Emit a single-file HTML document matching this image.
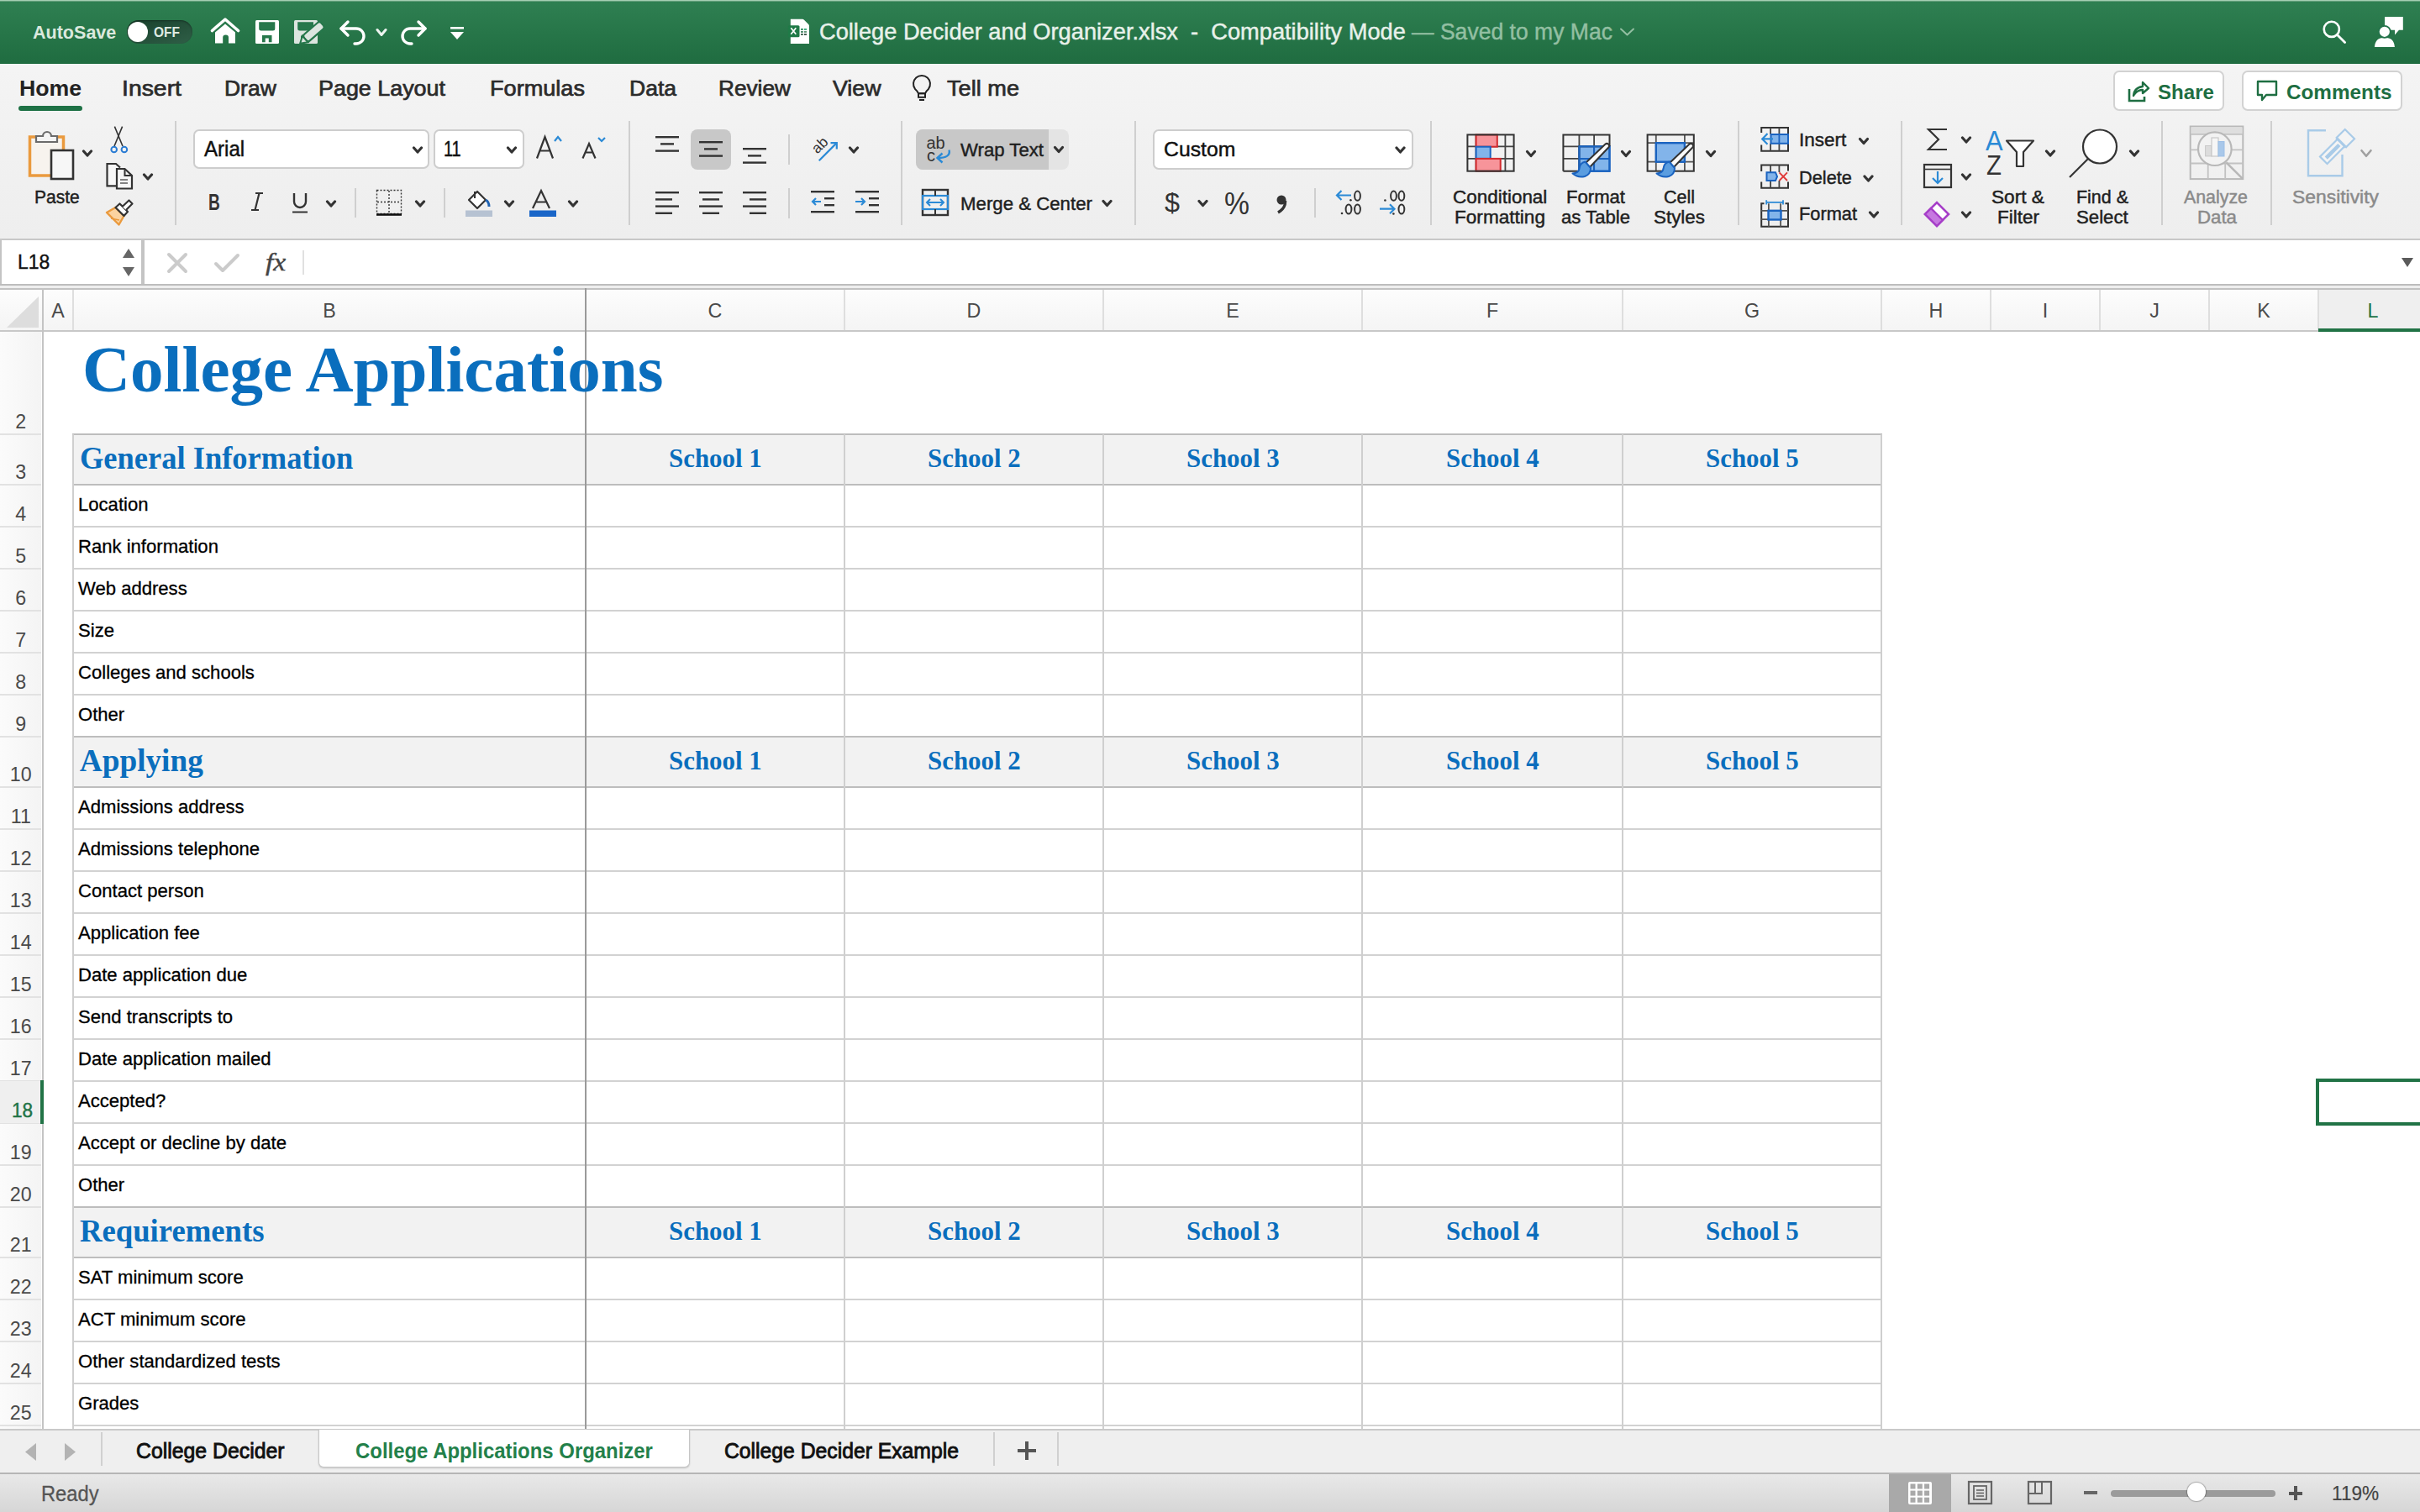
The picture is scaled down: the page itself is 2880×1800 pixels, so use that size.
<!DOCTYPE html>
<html><head><meta charset="utf-8"><style>
html,body{margin:0;padding:0;width:2880px;height:1800px;overflow:hidden;background:#fff;font-family:"Liberation Sans",sans-serif;}
.r{position:absolute;}
.t{position:absolute;white-space:pre;transform-origin:0 0;}
</style></head><body>
<div class="r" style="left:0px;top:0px;width:2880px;height:76px;background:linear-gradient(#2f8052,#1f6c40);"></div>
<div class="r" style="left:0px;top:0px;width:2880px;height:1px;background:#a6cfb3;"></div>
<div class="r" style="left:0px;top:1px;width:2880px;height:1px;background:#649f7b;"></div>
<div class="t" style="left:38.70px;top:27.00px;font-size:22.97px;line-height:22.97px;color:#dbe9de;font-weight:700;font-family:'Liberation Sans', sans-serif;transform:scaleX(0.9375);">AutoSave</div>
<div class="r" style="left:151px;top:24px;width:78px;height:28px;background:linear-gradient(160deg,#183f2b,#2f5f47);border-radius:14px;box-shadow:inset 0 1px 2px rgba(0,0,0,.35);"></div>
<div class="r" style="left:152px;top:26px;width:24px;height:24px;background:#ffffff;border-radius:12px;"></div>
<div class="t" style="left:183.00px;top:31.00px;font-size:15.99px;line-height:15.99px;color:#dfeae2;font-weight:700;font-family:'Liberation Sans', sans-serif;transform:scaleX(0.9695);">OFF</div>
<div class="r" style="left:0px;top:76px;width:2880px;height:209px;background:linear-gradient(#f4f4f4,#eeeeee);"></div>
<div class="r" style="left:0px;top:284px;width:2880px;height:2px;background:#c8c8c8;"></div>
<div class="t" style="left:22.60px;top:92.00px;font-size:26.00px;line-height:26.00px;color:#222222;font-weight:700;font-family:'Liberation Sans', sans-serif;transform:scaleX(1.0259);">Home</div>
<div class="t" style="left:145.00px;top:92.00px;font-size:26.00px;line-height:26.00px;color:#2b2b2b;font-weight:400;font-family:'Liberation Sans', sans-serif;transform:scaleX(1.0919);-webkit-text-stroke:0.7px #2b2b2b;">Insert</div>
<div class="t" style="left:267.00px;top:92.00px;font-size:26.00px;line-height:26.00px;color:#2b2b2b;font-weight:400;font-family:'Liberation Sans', sans-serif;transform:scaleX(1.0175);-webkit-text-stroke:0.7px #2b2b2b;">Draw</div>
<div class="t" style="left:379.00px;top:92.00px;font-size:26.00px;line-height:26.00px;color:#2b2b2b;font-weight:400;font-family:'Liberation Sans', sans-serif;transform:scaleX(1.0341);-webkit-text-stroke:0.7px #2b2b2b;">Page Layout</div>
<div class="t" style="left:583.00px;top:92.00px;font-size:26.00px;line-height:26.00px;color:#2b2b2b;font-weight:400;font-family:'Liberation Sans', sans-serif;transform:scaleX(1.0427);-webkit-text-stroke:0.7px #2b2b2b;">Formulas</div>
<div class="t" style="left:749.00px;top:92.00px;font-size:26.00px;line-height:26.00px;color:#2b2b2b;font-weight:400;font-family:'Liberation Sans', sans-serif;transform:scaleX(1.0193);-webkit-text-stroke:0.7px #2b2b2b;">Data</div>
<div class="t" style="left:855.00px;top:92.00px;font-size:26.00px;line-height:26.00px;color:#2b2b2b;font-weight:400;font-family:'Liberation Sans', sans-serif;transform:scaleX(1.0078);-webkit-text-stroke:0.7px #2b2b2b;">Review</div>
<div class="t" style="left:991.00px;top:92.00px;font-size:26.00px;line-height:26.00px;color:#2b2b2b;font-weight:400;font-family:'Liberation Sans', sans-serif;transform:scaleX(1.0295);-webkit-text-stroke:0.7px #2b2b2b;">View</div>
<div class="t" style="left:1127.00px;top:92.00px;font-size:26.00px;line-height:26.00px;color:#2b2b2b;font-weight:400;font-family:'Liberation Sans', sans-serif;transform:scaleX(1.0441);-webkit-text-stroke:0.7px #2b2b2b;">Tell me</div>
<div class="r" style="left:22px;top:126px;width:76px;height:6px;background:#1e7145;border-radius:3px;"></div>
<div class="r" style="left:2515px;top:84px;width:132px;height:48px;background:#ffffff;border:2px solid #d2d2d2;border-radius:7px;box-sizing:border-box;"></div>
<div class="t" style="left:2567.60px;top:98.00px;font-size:24.50px;line-height:24.50px;color:#1e6e42;font-weight:700;font-family:'Liberation Sans', sans-serif;transform:scaleX(0.9826);">Share</div>
<div class="r" style="left:2668px;top:84px;width:191px;height:48px;background:#ffffff;border:2px solid #d2d2d2;border-radius:7px;box-sizing:border-box;"></div>
<div class="t" style="left:2720.50px;top:98.00px;font-size:24.50px;line-height:24.50px;color:#1e6e42;font-weight:700;font-family:'Liberation Sans', sans-serif;transform:scaleX(0.9912);">Comments</div>
<div class="r" style="left:208px;top:144px;width:2px;height:124px;background:#cfcfcf;"></div>
<div class="r" style="left:748px;top:144px;width:2px;height:124px;background:#cfcfcf;"></div>
<div class="r" style="left:1072px;top:144px;width:2px;height:124px;background:#cfcfcf;"></div>
<div class="r" style="left:1350px;top:144px;width:2px;height:124px;background:#cfcfcf;"></div>
<div class="r" style="left:1702px;top:144px;width:2px;height:124px;background:#cfcfcf;"></div>
<div class="r" style="left:2068px;top:144px;width:2px;height:124px;background:#cfcfcf;"></div>
<div class="r" style="left:2262px;top:144px;width:2px;height:124px;background:#cfcfcf;"></div>
<div class="r" style="left:2572px;top:144px;width:2px;height:124px;background:#cfcfcf;"></div>
<div class="r" style="left:2702px;top:144px;width:2px;height:124px;background:#cfcfcf;"></div>
<svg class="r" style="left:30px;top:150px;" width="62" height="66" viewBox="0 0 62 66"><rect x="5.5" y="13" width="40" height="46" fill="#f7f3ee" stroke="#ea9a3e" stroke-width="3.5"/><path d="M13 19 V12 H21 A5 5 0 0 1 31 12 H38 V19 Z" fill="#f4f4f4" stroke="#6b6b6b" stroke-width="2.2"/><rect x="31" y="29" width="26" height="34" fill="#f7f7f7" stroke="#333" stroke-width="2.6"/></svg>
<svg class="r" style="left:97px;top:178px;" width="14" height="10" viewBox="0 0 14 10"><polyline points="2.5,2.0 7.0,7.0 11.5,2.0" fill="none" stroke="#333" stroke-width="3.2" stroke-linecap="round" stroke-linejoin="round"/></svg>
<div class="t" style="left:41.00px;top:224.00px;font-size:21.80px;line-height:21.80px;color:#1f1f1f;font-weight:400;font-family:'Liberation Sans', sans-serif;transform:scaleX(0.9650);-webkit-text-stroke:0.45px #1f1f1f;">Paste</div>
<svg class="r" style="left:128px;top:148px;" width="30" height="36" viewBox="0 0 30 36"><line x1="8.4" y1="2.6" x2="18" y2="26" stroke="#333" stroke-width="1.6"/><line x1="17.6" y1="2.6" x2="8" y2="26" stroke="#333" stroke-width="1.6"/><circle cx="7.7" cy="30" r="3.3" fill="none" stroke="#2b7cd3" stroke-width="2"/><circle cx="19.9" cy="30" r="3.3" fill="none" stroke="#2b7cd3" stroke-width="2"/></svg>
<svg class="r" style="left:124px;top:192px;" width="36" height="36" viewBox="0 0 36 36"><path d="M14.5 29.3 H3.5 V3 H14 L19 7.5" fill="#f7f7f7" stroke="#333" stroke-width="2.2"/><path d="M15 9 H24.5 L33 17 V32.5 H15 Z" fill="#f7f7f7" stroke="#333" stroke-width="2.2"/><path d="M24.5 9 V17 H33" fill="none" stroke="#333" stroke-width="2"/><line x1="19" y1="22" x2="28" y2="22" stroke="#666" stroke-width="1.6"/><line x1="19" y1="26" x2="28" y2="26" stroke="#666" stroke-width="1.6"/></svg>
<svg class="r" style="left:169px;top:206px;" width="14" height="10" viewBox="0 0 14 10"><polyline points="2.5,2.0 7.0,7.0 11.5,2.0" fill="none" stroke="#333" stroke-width="3.2" stroke-linecap="round" stroke-linejoin="round"/></svg>
<svg class="r" style="left:124px;top:236px;" width="36" height="34" viewBox="0 0 36 34"><path d="M3 17 L13.5 11 L23.5 21 L17.5 31.5 Z" fill="#fbd3a0" stroke="#ea9a3e" stroke-width="2.4" stroke-linejoin="round"/><path d="M8 24 L18 26" stroke="#ea9a3e" stroke-width="1.6"/><path d="M13.5 11 L18.5 6.5 L28 16 L23.5 21 Z" fill="#fff" stroke="#333" stroke-width="2.2" stroke-linejoin="round"/><path d="M21.5 10 L29.5 2.5 L33.5 6.5 L26 14" fill="#fff" stroke="#333" stroke-width="2.2" stroke-linejoin="round"/></svg>
<div class="r" style="left:230px;top:154px;width:281px;height:47px;background:#ffffff;border:2px solid #cdcdcd;border-radius:7px;box-sizing:border-box;"></div>
<div class="t" style="left:242.80px;top:165.00px;font-size:25.44px;line-height:25.44px;color:#111;font-weight:400;font-family:'Liberation Sans', sans-serif;transform:scaleX(0.9470);-webkit-text-stroke:0.45px #111;">Arial</div>
<svg class="r" style="left:490px;top:174px;" width="14" height="10" viewBox="0 0 14 10"><polyline points="2.5,2.0 7.0,7.0 11.5,2.0" fill="none" stroke="#333" stroke-width="3.2" stroke-linecap="round" stroke-linejoin="round"/></svg>
<div class="r" style="left:516px;top:154px;width:108px;height:47px;background:#ffffff;border:2px solid #cdcdcd;border-radius:7px;box-sizing:border-box;"></div>
<div class="t" style="left:528.00px;top:165.00px;font-size:25.44px;line-height:25.44px;color:#111;font-weight:400;font-family:'Liberation Sans', sans-serif;transform:scaleX(0.7840);-webkit-text-stroke:0.45px #111;">11</div>
<svg class="r" style="left:602px;top:174px;" width="14" height="10" viewBox="0 0 14 10"><polyline points="2.5,2.0 7.0,7.0 11.5,2.0" fill="none" stroke="#333" stroke-width="3.2" stroke-linecap="round" stroke-linejoin="round"/></svg>
<svg class="r" style="left:636px;top:158px;" width="36" height="34" viewBox="0 0 36 34"><path d="M3 30.5 L12.5 5 L22 30.5 M6.3 21.5 H18.7" fill="none" stroke="#333" stroke-width="2.2"/><polyline points="24,10 28,5 32,10" fill="none" stroke="#2b8ad6" stroke-width="2.2"/></svg>
<svg class="r" style="left:690px;top:160px;" width="34" height="32" viewBox="0 0 34 32"><path d="M3.5 28.5 L11 11 L18.5 28.5 M6.3 21.5 H15.7" fill="none" stroke="#333" stroke-width="2.2"/><polyline points="22,4 26,8 30,4" fill="none" stroke="#2b8ad6" stroke-width="2.2"/></svg>
<div class="t" style="left:247.80px;top:226.00px;font-size:28.34px;line-height:28.34px;color:#333;font-weight:700;font-family:'Liberation Sans', sans-serif;transform:scaleX(0.6744);">B</div>
<svg class="r" style="left:296px;top:228px;" width="20" height="24" viewBox="0 0 20 24"><path d="M8 2 H17 M3 22 H12 M12.5 2 L7.5 22" fill="none" stroke="#333" stroke-width="2.2"/></svg>
<svg class="r" style="left:346px;top:228px;" width="22" height="28" viewBox="0 0 22 28"><path d="M4 2 V12 A7 7 0 0 0 18 12 V2" fill="none" stroke="#333" stroke-width="2.4"/><line x1="2" y1="24.5" x2="20" y2="24.5" stroke="#333" stroke-width="2"/></svg>
<svg class="r" style="left:387px;top:238px;" width="14" height="10" viewBox="0 0 14 10"><polyline points="2.5,2.0 7.0,7.0 11.5,2.0" fill="none" stroke="#333" stroke-width="3.2" stroke-linecap="round" stroke-linejoin="round"/></svg>
<div class="r" style="left:422px;top:224px;width:2px;height:35px;background:#cfcfcf;"></div>
<svg class="r" style="left:446px;top:224px;" width="34" height="34" viewBox="0 0 34 34"><rect x="2.5" y="2.5" width="29" height="28" fill="none" stroke="#333" stroke-width="1.4" stroke-dasharray="2 2"/><line x1="17" y1="3" x2="17" y2="30" stroke="#333" stroke-width="1.4" stroke-dasharray="2 2"/><line x1="3" y1="16.5" x2="31" y2="16.5" stroke="#333" stroke-width="1.4" stroke-dasharray="2 2"/><line x1="2" y1="31.5" x2="32" y2="31.5" stroke="#111" stroke-width="2.6"/></svg>
<svg class="r" style="left:493px;top:238px;" width="14" height="10" viewBox="0 0 14 10"><polyline points="2.5,2.0 7.0,7.0 11.5,2.0" fill="none" stroke="#333" stroke-width="3.2" stroke-linecap="round" stroke-linejoin="round"/></svg>
<div class="r" style="left:528px;top:224px;width:2px;height:35px;background:#cfcfcf;"></div>
<svg class="r" style="left:552px;top:224px;" width="38" height="36" viewBox="0 0 38 36"><path d="M6 14 L16 4 L26 14 L16 24 Z" fill="#fff" stroke="#333" stroke-width="2.2" stroke-linejoin="round"/><path d="M13 4 V12" stroke="#333" stroke-width="2"/><path d="M26 14 Q30 16 30 22" fill="none" stroke="#1f63b3" stroke-width="3"/><rect x="2" y="26.5" width="32" height="7.5" fill="#b6c2d2"/></svg>
<svg class="r" style="left:599px;top:238px;" width="14" height="10" viewBox="0 0 14 10"><polyline points="2.5,2.0 7.0,7.0 11.5,2.0" fill="none" stroke="#333" stroke-width="3.2" stroke-linecap="round" stroke-linejoin="round"/></svg>
<svg class="r" style="left:628px;top:224px;" width="36" height="36" viewBox="0 0 36 36"><path d="M6 24 L16 3 L26 24 M9.5 16.5 H22.5" fill="none" stroke="#333" stroke-width="2.2"/><rect x="2" y="26.5" width="32" height="7.5" fill="#1a66c8"/></svg>
<svg class="r" style="left:675px;top:238px;" width="14" height="10" viewBox="0 0 14 10"><polyline points="2.5,2.0 7.0,7.0 11.5,2.0" fill="none" stroke="#333" stroke-width="3.2" stroke-linecap="round" stroke-linejoin="round"/></svg>
<svg class="r" style="left:780px;top:162px;" width="28" height="19" viewBox="0 0 28 19"><rect x="0.0" y="0.0" width="28" height="2.4" fill="#333"/><rect x="6.0" y="8.2" width="16" height="2.4" fill="#333"/><rect x="0.0" y="16.4" width="28" height="2.4" fill="#333"/></svg>
<div class="r" style="left:822px;top:154px;width:48px;height:48px;background:#c8c8c8;border-radius:8px;"></div>
<svg class="r" style="left:832px;top:168px;" width="28" height="19" viewBox="0 0 28 19"><rect x="0.0" y="0.0" width="28" height="2.4" fill="#333"/><rect x="6.0" y="8.2" width="16" height="2.4" fill="#333"/><rect x="0.0" y="16.4" width="28" height="2.4" fill="#333"/></svg>
<svg class="r" style="left:884px;top:176px;" width="28" height="19" viewBox="0 0 28 19"><rect x="0.0" y="0.0" width="28" height="2.4" fill="#333"/><rect x="6.0" y="8.2" width="16" height="2.4" fill="#333"/><rect x="0.0" y="16.4" width="28" height="2.4" fill="#333"/></svg>
<div class="r" style="left:938px;top:160px;width:2px;height:36px;background:#cfcfcf;"></div>
<svg class="r" style="left:960px;top:158px;" width="40" height="38" viewBox="0 0 40 38"><text x="0" y="0" transform="translate(12.8,25.8) rotate(-45)" font-family="Liberation Sans" font-size="17.5" fill="#333">ab</text><line x1="14.7" y1="33.2" x2="35.5" y2="12.4" stroke="#2b8ad6" stroke-width="2.2"/><polyline points="28.5,12.2 35.8,12.2 35.8,19.5" fill="none" stroke="#2b8ad6" stroke-width="2.2"/></svg>
<svg class="r" style="left:1009px;top:174px;" width="14" height="10" viewBox="0 0 14 10"><polyline points="2.5,2.0 7.0,7.0 11.5,2.0" fill="none" stroke="#333" stroke-width="3.2" stroke-linecap="round" stroke-linejoin="round"/></svg>
<svg class="r" style="left:780px;top:228px;" width="28" height="27" viewBox="0 0 28 27"><rect x="0" y="0.0" width="28" height="2.4" fill="#333"/><rect x="0" y="8.2" width="20" height="2.4" fill="#333"/><rect x="0" y="16.4" width="28" height="2.4" fill="#333"/><rect x="0" y="24.599999999999998" width="20" height="2.4" fill="#333"/></svg>
<svg class="r" style="left:832px;top:228px;" width="28" height="27" viewBox="0 0 28 27"><rect x="0.0" y="0.0" width="28" height="2.4" fill="#333"/><rect x="4.0" y="8.2" width="20" height="2.4" fill="#333"/><rect x="0.0" y="16.4" width="28" height="2.4" fill="#333"/><rect x="4.0" y="24.599999999999998" width="20" height="2.4" fill="#333"/></svg>
<svg class="r" style="left:884px;top:228px;" width="28" height="27" viewBox="0 0 28 27"><rect x="0" y="0.0" width="28" height="2.4" fill="#333"/><rect x="8" y="8.2" width="20" height="2.4" fill="#333"/><rect x="0" y="16.4" width="28" height="2.4" fill="#333"/><rect x="8" y="24.599999999999998" width="20" height="2.4" fill="#333"/></svg>
<div class="r" style="left:938px;top:224px;width:2px;height:36px;background:#cfcfcf;"></div>
<svg class="r" style="left:964px;top:226px;" width="32" height="32" viewBox="0 0 32 32"><rect x="1" y="1" width="28" height="2.4" fill="#333"/><rect x="17" y="9" width="12" height="2.4" fill="#333"/><rect x="17" y="17" width="12" height="2.4" fill="#333"/><rect x="1" y="25" width="28" height="2.4" fill="#333"/><path d="M13 14 H3 M7 10 L3 14 L7 18" fill="none" stroke="#2b8ad6" stroke-width="2.2"/></svg>
<svg class="r" style="left:1017px;top:226px;" width="32" height="32" viewBox="0 0 32 32"><rect x="1" y="1" width="28" height="2.4" fill="#333"/><rect x="17" y="9" width="12" height="2.4" fill="#333"/><rect x="17" y="17" width="12" height="2.4" fill="#333"/><rect x="1" y="25" width="28" height="2.4" fill="#333"/><path d="M1 14 H12 M8 10 L12 14 L8 18" fill="none" stroke="#2b8ad6" stroke-width="2.2"/></svg>
<div class="r" style="left:1090px;top:154px;width:182px;height:48px;background:#e4e4e4;border-radius:8px;"></div>
<div class="r" style="left:1090px;top:154px;width:158px;height:48px;background:#c8c8c8;border-radius:8px 0 0 8px;"></div>
<svg class="r" style="left:1098px;top:158px;" width="40" height="40" viewBox="0 0 40 40"><text x="4.5" y="19" font-family="Liberation Sans" font-size="20" fill="#333">ab</text><text x="5" y="33.6" font-family="Liberation Sans" font-size="20" fill="#333">c</text><path d="M31.5 20.5 Q34 30 17.5 30" fill="none" stroke="#2b8ad6" stroke-width="2.4"/><path d="M23.5 24.5 L17.5 30 L23.5 35.5" fill="none" stroke="#2b8ad6" stroke-width="2.4"/></svg>
<div class="t" style="left:1143.00px;top:168.00px;font-size:22.53px;line-height:22.53px;color:#1f1f1f;font-weight:400;font-family:'Liberation Sans', sans-serif;transform:scaleX(0.9842);-webkit-text-stroke:0.45px #1f1f1f;">Wrap Text</div>
<svg class="r" style="left:1253px;top:173px;" width="14" height="10" viewBox="0 0 14 10"><polyline points="2.5,2.5 7.0,7.5 11.5,2.5" fill="none" stroke="#333" stroke-width="3.2" stroke-linecap="round" stroke-linejoin="round"/></svg>
<svg class="r" style="left:1096px;top:224px;" width="34" height="34" viewBox="0 0 34 34"><rect x="2" y="2" width="30" height="30" fill="none" stroke="#333" stroke-width="2.4"/><rect x="2" y="9" width="30" height="16" fill="none" stroke="#2b8ad6" stroke-width="2.2"/><line x1="17" y1="2" x2="17" y2="9" stroke="#333" stroke-width="2"/><line x1="17" y1="25" x2="17" y2="32" stroke="#333" stroke-width="2"/><path d="M7 17 H27 M11 13 L7 17 L11 21 M23 13 L27 17 L23 21" fill="none" stroke="#2b8ad6" stroke-width="2"/></svg>
<div class="t" style="left:1143.00px;top:232.00px;font-size:22.53px;line-height:22.53px;color:#1f1f1f;font-weight:400;font-family:'Liberation Sans', sans-serif;transform:scaleX(0.9872);-webkit-text-stroke:0.45px #1f1f1f;">Merge &amp; Center</div>
<svg class="r" style="left:1311px;top:237px;" width="14" height="10" viewBox="0 0 14 10"><polyline points="2.0,2.5 6.5,7.5 11.0,2.5" fill="none" stroke="#333" stroke-width="3.2" stroke-linecap="round" stroke-linejoin="round"/></svg>
<div class="r" style="left:1372px;top:154px;width:310px;height:48px;background:#ffffff;border:2px solid #cdcdcd;border-radius:7px;box-sizing:border-box;"></div>
<div class="t" style="left:1384.70px;top:166.00px;font-size:24.71px;line-height:24.71px;color:#111;font-weight:400;font-family:'Liberation Sans', sans-serif;transform:scaleX(1.0021);-webkit-text-stroke:0.45px #111;">Custom</div>
<svg class="r" style="left:1660px;top:174px;" width="14" height="10" viewBox="0 0 14 10"><polyline points="2.0,2.0 6.5,7.0 11.0,2.0" fill="none" stroke="#333" stroke-width="3.2" stroke-linecap="round" stroke-linejoin="round"/></svg>
<div class="t" style="left:1386.00px;top:225.00px;font-size:31.98px;line-height:31.98px;color:#333;font-weight:400;font-family:'Liberation Sans', sans-serif;transform:scaleX(1.0124);">$</div>
<svg class="r" style="left:1425px;top:237px;" width="14" height="10" viewBox="0 0 14 10"><polyline points="2.0,2.5 6.5,7.5 11.0,2.5" fill="none" stroke="#333" stroke-width="3.2" stroke-linecap="round" stroke-linejoin="round"/></svg>
<div class="t" style="left:1457.00px;top:224.00px;font-size:37.79px;line-height:37.79px;color:#333;font-weight:400;font-family:'Liberation Sans', sans-serif;transform:scaleX(0.8930);">%</div>
<svg class="r" style="left:1514px;top:230px;" width="22" height="28" viewBox="0 0 22 28"><circle cx="11" cy="8" r="5.5" fill="#333"/><path d="M15.5 9 Q16 18 7 23" fill="none" stroke="#333" stroke-width="3.4"/></svg>
<div class="r" style="left:1564px;top:224px;width:2px;height:35px;background:#cfcfcf;"></div>
<svg class="r" style="left:1588px;top:224px;" width="36" height="36" viewBox="0 0 36 36"><path d="M20 8.5 H3 M8.5 3 L3 8.5 L8.5 14" fill="none" stroke="#2b8ad6" stroke-width="2.2"/><circle cx="19.4" cy="14.3" r="1.3" fill="#333"/><ellipse cx="27.5" cy="9.2" rx="3.4" ry="5.6" fill="none" stroke="#333" stroke-width="2"/><circle cx="9" cy="30" r="1.3" fill="#333"/><ellipse cx="17" cy="25" rx="3.4" ry="5.6" fill="none" stroke="#333" stroke-width="2"/><ellipse cx="27.5" cy="25" rx="3.4" ry="5.6" fill="none" stroke="#333" stroke-width="2"/></svg>
<svg class="r" style="left:1639px;top:224px;" width="36" height="36" viewBox="0 0 36 36"><circle cx="9.4" cy="14.5" r="1.3" fill="#333"/><ellipse cx="19.5" cy="9.2" rx="3.4" ry="5.6" fill="none" stroke="#333" stroke-width="2"/><ellipse cx="28.9" cy="9.2" rx="3.4" ry="5.6" fill="none" stroke="#333" stroke-width="2"/><path d="M3 24.7 H20.5 M15 19.2 L20.5 24.7 L15 30.2" fill="none" stroke="#2b8ad6" stroke-width="2.2"/><circle cx="19.4" cy="30.5" r="1.3" fill="#333"/><ellipse cx="28.9" cy="25" rx="3.4" ry="5.6" fill="none" stroke="#333" stroke-width="2"/></svg>
<svg class="r" style="left:1744px;top:158px;" width="60" height="50" viewBox="0 0 60 50"><path d="M2.4 16.3 H57.6 M2.4 30.9 H57.6 M12.6 2.4 V45.7 M47.4 2.4 V45.7" stroke="#444" stroke-width="1.8"/><rect x="12.6" y="2.4" width="25.2" height="14.3" fill="#f7949a" stroke="#d32a2e" stroke-width="2"/><rect x="12.6" y="16.7" width="17.1" height="14.2" fill="#82b4ea" stroke="#1a63c0" stroke-width="2"/><rect x="12.6" y="30.9" width="29.1" height="14.8" fill="#f7949a" stroke="#d32a2e" stroke-width="2"/><rect x="2.4" y="2.4" width="55.2" height="43.3" fill="none" stroke="#333" stroke-width="2"/></svg>
<svg class="r" style="left:1815px;top:178px;" width="14" height="10" viewBox="0 0 14 10"><polyline points="2.5,2.5 7.0,7.5 11.5,2.5" fill="none" stroke="#333" stroke-width="3.2" stroke-linecap="round" stroke-linejoin="round"/></svg>
<div class="t" style="left:1728.60px;top:225.00px;font-size:21.51px;line-height:21.51px;color:#1f1f1f;font-weight:400;font-family:'Liberation Sans', sans-serif;transform:scaleX(1.0444);-webkit-text-stroke:0.45px #1f1f1f;">Conditional</div>
<div class="t" style="left:1731.00px;top:249.00px;font-size:21.51px;line-height:21.51px;color:#1f1f1f;font-weight:400;font-family:'Liberation Sans', sans-serif;transform:scaleX(1.0505);-webkit-text-stroke:0.45px #1f1f1f;">Formatting</div>
<svg class="r" style="left:1858px;top:158px;" width="60" height="50" viewBox="0 0 60 50"><rect x="21.4" y="16.3" width="36.1" height="29.4" fill="#82b4ea" stroke="#1a63c0" stroke-width="2.2"/><path d="M2.4 16.3 H57.5 M2.4 30.9 H57.5 M21.4 2.4 V45.7 M39.1 2.4 V45.7" stroke="#444" stroke-width="1.8"/><path d="M21.4 16.3 H57.5 V45.7 H21.4 Z M21.4 30.9 H57.5 M39.1 16.3 V45.7" fill="none" stroke="#1a63c0" stroke-width="2"/><path d="M2.4 45.7 V2.4 H57.5 V16.3 M2.4 45.7 H21.4" fill="none" stroke="#333" stroke-width="2"/></svg>
<svg class="r" style="left:1870px;top:168px;" width="50" height="44" viewBox="0 0 50 44"><path d="M44.3 3.7 Q46 5.5 44.3 7.5 L22 31 L17 26 L40.3 3.7 Q42.3 2 44.3 3.7 Z" fill="#fafafa" stroke="#333" stroke-width="2" stroke-linejoin="round"/><path d="M16.5 24.5 Q10 26 9.5 33 Q8.5 38 1.5 38.5 Q8 44 16 42 Q23 39.5 23 32 Z" fill="#5a9de0" stroke="#1a63c0" stroke-width="2" stroke-linejoin="round"/></svg>
<svg class="r" style="left:1928px;top:178px;" width="14" height="10" viewBox="0 0 14 10"><polyline points="2.5,2.5 7.0,7.5 11.5,2.5" fill="none" stroke="#333" stroke-width="3.2" stroke-linecap="round" stroke-linejoin="round"/></svg>
<div class="t" style="left:1864.00px;top:225.00px;font-size:21.51px;line-height:21.51px;color:#1f1f1f;font-weight:400;font-family:'Liberation Sans', sans-serif;transform:scaleX(1.0275);-webkit-text-stroke:0.45px #1f1f1f;">Format</div>
<div class="t" style="left:1858.00px;top:249.00px;font-size:21.51px;line-height:21.51px;color:#1f1f1f;font-weight:400;font-family:'Liberation Sans', sans-serif;transform:scaleX(1.0283);-webkit-text-stroke:0.45px #1f1f1f;">as Table</div>
<svg class="r" style="left:1958px;top:158px;" width="60" height="50" viewBox="0 0 60 50"><path d="M2.6 12.2 H57.8 M2.6 34.7 H57.8 M12.8 2.4 V45.7 M46.9 2.4 V45.7" stroke="#555" stroke-width="1.8"/><rect x="12.8" y="12.2" width="34.1" height="22.5" fill="#82b4ea" stroke="#1a63c0" stroke-width="2.4"/><rect x="2.6" y="2.4" width="55.2" height="43.3" fill="none" stroke="#333" stroke-width="2"/></svg>
<svg class="r" style="left:1970px;top:168px;" width="50" height="44" viewBox="0 0 50 44"><path d="M44.3 3.7 Q46 5.5 44.3 7.5 L22 31 L17 26 L40.3 3.7 Q42.3 2 44.3 3.7 Z" fill="#fafafa" stroke="#333" stroke-width="2" stroke-linejoin="round"/><path d="M16.5 24.5 Q10 26 9.5 33 Q8.5 38 1.5 38.5 Q8 44 16 42 Q23 39.5 23 32 Z" fill="#5a9de0" stroke="#1a63c0" stroke-width="2" stroke-linejoin="round"/></svg>
<svg class="r" style="left:2029px;top:178px;" width="14" height="10" viewBox="0 0 14 10"><polyline points="2.5,2.5 7.0,7.5 11.5,2.5" fill="none" stroke="#333" stroke-width="3.2" stroke-linecap="round" stroke-linejoin="round"/></svg>
<div class="t" style="left:1980.00px;top:225.00px;font-size:21.51px;line-height:21.51px;color:#1f1f1f;font-weight:400;font-family:'Liberation Sans', sans-serif;-webkit-text-stroke:0.45px #1f1f1f;">Cell</div>
<div class="t" style="left:1968.00px;top:249.00px;font-size:21.51px;line-height:21.51px;color:#1f1f1f;font-weight:400;font-family:'Liberation Sans', sans-serif;transform:scaleX(1.0414);-webkit-text-stroke:0.45px #1f1f1f;">Styles</div>
<svg class="r" style="left:2094px;top:150px;" width="36" height="32" viewBox="0 0 36 32"><path d="M2.2 8 V2 H34 V29.8 H2.2 V22.5" fill="none" stroke="#333" stroke-width="2"/><path d="M13.1 2 V10 M23.4 2 V10 M13.1 20.8 V29.8 M23.4 20.8 V29.8" stroke="#444" stroke-width="1.8"/><rect x="13.5" y="10" width="20.5" height="10.8" fill="#82b4ea" stroke="#1a63c0" stroke-width="2"/><line x1="23.4" y1="10" x2="23.4" y2="20.8" stroke="#1a63c0" stroke-width="1.8"/><path d="M16 15.4 H3.5 M9.5 9 L3.2 15.4 L9.5 21.8" fill="none" stroke="#2b8ad6" stroke-width="2.2"/></svg>
<div class="t" style="left:2140.60px;top:156.00px;font-size:22.09px;line-height:22.09px;color:#1f1f1f;font-weight:400;font-family:'Liberation Sans', sans-serif;transform:scaleX(1.0207);-webkit-text-stroke:0.45px #1f1f1f;">Insert</div>
<svg class="r" style="left:2211px;top:163px;" width="14" height="10" viewBox="0 0 14 10"><polyline points="2.5,2.5 7.0,7.5 11.5,2.5" fill="none" stroke="#333" stroke-width="3.2" stroke-linecap="round" stroke-linejoin="round"/></svg>
<svg class="r" style="left:2094px;top:194px;" width="36" height="32" viewBox="0 0 36 32"><path d="M2.2 10 V2.4 H34 V9.5 M34 22.5 V29.7 H2.2 V22.5" fill="none" stroke="#333" stroke-width="2"/><path d="M13.1 2.4 V11 M23.4 2.4 V11 M13.1 21 V29.7 M23.4 21 V29.7" stroke="#444" stroke-width="1.8"/><path d="M8.5 11.2 H19 L21 16.2 L19 21.1 H8.5 Z" fill="#82b4ea" stroke="#1a63c0" stroke-width="2"/><path d="M23.5 11.3 L33 21 M33 11.3 L23.5 21" stroke="#e03a3a" stroke-width="1.9"/></svg>
<div class="t" style="left:2141.00px;top:201.00px;font-size:22.09px;line-height:22.09px;color:#1f1f1f;font-weight:400;font-family:'Liberation Sans', sans-serif;transform:scaleX(0.9864);-webkit-text-stroke:0.45px #1f1f1f;">Delete</div>
<svg class="r" style="left:2217px;top:208px;" width="14" height="10" viewBox="0 0 14 10"><polyline points="2.0,2.0 6.5,7.0 11.0,2.0" fill="none" stroke="#333" stroke-width="3.2" stroke-linecap="round" stroke-linejoin="round"/></svg>
<svg class="r" style="left:2094px;top:236px;" width="36" height="36" viewBox="0 0 36 36"><path d="M2.2 10 V6.2 H5.5 M30.5 6.2 H34 V33.7 H2.2 V10" fill="none" stroke="#333" stroke-width="2"/><path d="M10.9 6.2 V33.7 M25.1 6.2 V33.7 M2.2 14.8 H34 M2.2 25.1 H34" stroke="#555" stroke-width="1.8"/><rect x="10.5" y="14.8" width="15" height="10.7" fill="#82b4ea" stroke="#1a63c0" stroke-width="2.4"/><path d="M8.2 4.9 H28 M8.2 2.3 V7.5 M28 2.3 V7.5" fill="none" stroke="#2b8ad6" stroke-width="1.8"/></svg>
<div class="t" style="left:2141.00px;top:244.00px;font-size:22.09px;line-height:22.09px;color:#1f1f1f;font-weight:400;font-family:'Liberation Sans', sans-serif;transform:scaleX(0.9862);-webkit-text-stroke:0.45px #1f1f1f;">Format</div>
<svg class="r" style="left:2223px;top:251px;" width="14" height="10" viewBox="0 0 14 10"><polyline points="2.5,2.0 7.0,7.0 11.5,2.0" fill="none" stroke="#333" stroke-width="3.2" stroke-linecap="round" stroke-linejoin="round"/></svg>
<svg class="r" style="left:2292px;top:150px;" width="28" height="32" viewBox="0 0 28 32"><path d="M25 4 H3 L15 16 L3 28 H25" fill="none" stroke="#333" stroke-width="2.2"/></svg>
<svg class="r" style="left:2333px;top:162px;" width="14" height="10" viewBox="0 0 14 10"><polyline points="2.5,2.0 7.0,7.0 11.5,2.0" fill="none" stroke="#333" stroke-width="3.2" stroke-linecap="round" stroke-linejoin="round"/></svg>
<svg class="r" style="left:2288px;top:194px;" width="36" height="32" viewBox="0 0 36 32"><rect x="2" y="2" width="32" height="27" fill="none" stroke="#333" stroke-width="2.2"/><line x1="2" y1="7.5" x2="34" y2="7.5" stroke="#333" stroke-width="1.6"/><path d="M18 10 V24 M12 18 L18 24 L24 18" fill="none" stroke="#2b8ad6" stroke-width="2.2"/></svg>
<svg class="r" style="left:2333px;top:206px;" width="14" height="10" viewBox="0 0 14 10"><polyline points="2.5,2.0 7.0,7.0 11.5,2.0" fill="none" stroke="#333" stroke-width="3.2" stroke-linecap="round" stroke-linejoin="round"/></svg>
<svg class="r" style="left:2288px;top:236px;" width="36" height="36" viewBox="0 0 36 36"><path d="M3 19 L17 5 L31 19 L17 33 Z" fill="#fff" stroke="#a63ec8" stroke-width="2.6"/><path d="M3 19 L10 12 L24 26 L17 33 Z" fill="#c678e0" stroke="#a63ec8" stroke-width="2.4"/></svg>
<svg class="r" style="left:2333px;top:251px;" width="14" height="10" viewBox="0 0 14 10"><polyline points="2.5,2.0 7.0,7.0 11.5,2.0" fill="none" stroke="#333" stroke-width="3.2" stroke-linecap="round" stroke-linejoin="round"/></svg>
<div class="t" style="left:2363.00px;top:151.00px;font-size:33.43px;line-height:33.43px;color:#2b8ad6;font-weight:400;font-family:'Liberation Sans', sans-serif;transform:scaleX(0.9239);">A</div>
<div class="t" style="left:2364.00px;top:180.00px;font-size:33.43px;line-height:33.43px;color:#333;font-weight:400;font-family:'Liberation Sans', sans-serif;transform:scaleX(0.8812);">Z</div>
<svg class="r" style="left:2385px;top:164px;" width="37" height="38" viewBox="0 0 37 38"><path d="M3 3.5 H35 L23 17 V34 H15 V17 Z" fill="#fff" stroke="#333" stroke-width="2.2" stroke-linejoin="round"/></svg>
<svg class="r" style="left:2433px;top:178px;" width="14" height="10" viewBox="0 0 14 10"><polyline points="2.5,2.0 7.0,7.0 11.5,2.0" fill="none" stroke="#333" stroke-width="3.2" stroke-linecap="round" stroke-linejoin="round"/></svg>
<div class="t" style="left:2370.00px;top:225.00px;font-size:21.51px;line-height:21.51px;color:#1f1f1f;font-weight:400;font-family:'Liberation Sans', sans-serif;transform:scaleX(1.0538);-webkit-text-stroke:0.45px #1f1f1f;">Sort &amp;</div>
<div class="t" style="left:2377.00px;top:249.00px;font-size:21.51px;line-height:21.51px;color:#1f1f1f;font-weight:400;font-family:'Liberation Sans', sans-serif;transform:scaleX(1.0461);-webkit-text-stroke:0.45px #1f1f1f;">Filter</div>
<svg class="r" style="left:2460px;top:152px;" width="64" height="62" viewBox="0 0 64 62"><circle cx="39" cy="22.5" r="20" fill="#fff" stroke="#333" stroke-width="2.2"/><line x1="25" y1="37" x2="3" y2="59" stroke="#333" stroke-width="2.2"/></svg>
<svg class="r" style="left:2533px;top:178px;" width="14" height="10" viewBox="0 0 14 10"><polyline points="2.5,2.0 7.0,7.0 11.5,2.0" fill="none" stroke="#333" stroke-width="3.2" stroke-linecap="round" stroke-linejoin="round"/></svg>
<div class="t" style="left:2470.70px;top:225.00px;font-size:21.51px;line-height:21.51px;color:#1f1f1f;font-weight:400;font-family:'Liberation Sans', sans-serif;transform:scaleX(0.9973);-webkit-text-stroke:0.45px #1f1f1f;">Find &amp;</div>
<div class="t" style="left:2471.00px;top:249.00px;font-size:21.51px;line-height:21.51px;color:#1f1f1f;font-weight:400;font-family:'Liberation Sans', sans-serif;transform:scaleX(1.0321);-webkit-text-stroke:0.45px #1f1f1f;">Select</div>
<svg class="r" style="left:2604px;top:148px;" width="68" height="68" viewBox="0 0 68 68"><rect x="2.7" y="2.5" width="62.6" height="62.6" fill="none" stroke="#b9b9b9" stroke-width="2"/><rect x="3.5" y="3.3" width="61" height="8.5" fill="#dedede"/><path d="M2.7 11.8 H65.3 M2.7 30.4 H65.3 M2.7 46.5 H65.3 M23.7 46.5 V65 M44.2 46.5 V65" stroke="#c2c2c2" stroke-width="1.8"/><circle cx="31.8" cy="29.2" r="19.8" fill="#f2f2f2" stroke="#b8b8b8" stroke-width="2.2"/><line x1="45.4" y1="45.3" x2="65" y2="64.8" stroke="#b8b8b8" stroke-width="2.6"/><rect x="20.6" y="25.5" width="7.4" height="12.4" fill="#dcdcdc" stroke="#c8c8c8" stroke-width="1"/><rect x="28" y="16" width="8" height="22" fill="#f6f6f6" stroke="#c8c8c8" stroke-width="1.2"/><rect x="36" y="20.5" width="7" height="17.5" fill="#a9c8ea" stroke="#9dbfe6" stroke-width="1"/></svg>
<div class="t" style="left:2599.00px;top:225.00px;font-size:21.51px;line-height:21.51px;color:#8a8a8a;font-weight:400;font-family:'Liberation Sans', sans-serif;transform:scaleX(0.9930);-webkit-text-stroke:0.45px #8a8a8a;">Analyze</div>
<div class="t" style="left:2615.00px;top:249.00px;font-size:21.51px;line-height:21.51px;color:#8a8a8a;font-weight:400;font-family:'Liberation Sans', sans-serif;transform:scaleX(1.0340);-webkit-text-stroke:0.45px #8a8a8a;">Data</div>
<svg class="r" style="left:2744px;top:148px;" width="60" height="66" viewBox="0 0 60 66"><path d="M24 7.3 H3 V61.3 H43.5 V36" fill="none" stroke="#a9cbe8" stroke-width="2.4"/><g transform="rotate(-45 34 30)"><rect x="16" y="24" width="30" height="12" fill="#f4f4f4" stroke="#a9cbe8" stroke-width="2.2"/><rect x="20" y="28" width="22" height="4.5" fill="#a9cbe8"/><rect x="46" y="22" width="14" height="16" fill="#f4f4f4" stroke="#a9cbe8" stroke-width="2.2"/><rect x="44" y="22" width="3" height="16" fill="#a9cbe8"/></g></svg>
<svg class="r" style="left:2808px;top:177px;" width="16" height="11" viewBox="0 0 16 11"><polyline points="2.5,2.25 8.0,8.75 13.5,2.25" fill="none" stroke="#a0a0a0" stroke-width="2.6" stroke-linecap="round" stroke-linejoin="round"/></svg>
<div class="t" style="left:2728.00px;top:225.00px;font-size:21.51px;line-height:21.51px;color:#8a8a8a;font-weight:400;font-family:'Liberation Sans', sans-serif;transform:scaleX(1.0638);-webkit-text-stroke:0.45px #8a8a8a;">Sensitivity</div>
<svg class="r" style="left:250px;top:20px;" width="38" height="34" viewBox="0 0 38 34"><path d="M2.5 16.5 L18 3 L33.5 16.5" fill="none" stroke="#fff" stroke-width="3.6" stroke-linecap="round" stroke-linejoin="round"/><path d="M6 18.5 L18 8.5 L30 18.5 V31.5 H22 V24.5 Q22 21.5 18.6 21.5 Q15.2 21.5 15.2 24.5 V31.5 H6 Z" fill="#fff"/></svg>
<svg class="r" style="left:302px;top:22px;" width="32" height="32" viewBox="0 0 32 32"><path d="M2 3.5 Q2 2 3.5 2 H28.5 Q30 2 30 3.5 V28.5 Q30 30 28.5 30 H3.5 Q2 30 2 28.5 Z" fill="#fff"/><path d="M6.2 4.3 H25.3 V12 Q25.3 14.5 22.8 14.5 H8.7 Q6.2 14.5 6.2 12 Z" fill="#26774b"/><path d="M10 28.2 V20 H21.5 V28.2 H17.8 V23.6 H13.7 V28.2 Z" fill="#26774b"/></svg>
<svg class="r" style="left:348px;top:22px;" width="42" height="32" viewBox="0 0 42 32"><path d="M2 3.5 Q2 2 3.5 2 H28.5 Q30 2 30 3.5 V28.5 Q30 30 28.5 30 H3.5 Q2 30 2 28.5 Z" fill="#dce5df"/><path d="M6.2 4.3 H25 V12 Q25 14.5 22.5 14.5 H8.7 Q6.2 14.5 6.2 12 Z" fill="#26774b"/><path d="M10 28.2 V20.6 H18 V28.2 H15.6 V23.6 H12.4 V28.2 Z" fill="#26774b"/><g transform="rotate(-41 25 16)"><rect x="12" y="11" width="27" height="10" rx="3" fill="#dce5df" stroke="#26774b" stroke-width="2.2"/><path d="M12 11 L4 16 L12 21 Z" fill="#dce5df" stroke="#26774b" stroke-width="2"/></g></svg>
<svg class="r" style="left:402px;top:22px;" width="36" height="32" viewBox="0 0 36 32"><path d="M4 12 H22 A9 9 0 0 1 22 30 H20" fill="none" stroke="#fff" stroke-width="3.4" stroke-linecap="round"/><path d="M12 4 L4 12 L12 20" fill="none" stroke="#fff" stroke-width="3.4" stroke-linecap="round" stroke-linejoin="round"/></svg>
<svg class="r" style="left:447px;top:33px;" width="15" height="11" viewBox="0 0 15 11"><polyline points="2.0,2.5 7.0,8.5 12.0,2.5" fill="none" stroke="#eef4f0" stroke-width="3" stroke-linecap="round" stroke-linejoin="round"/></svg>
<svg class="r" style="left:474px;top:22px;" width="36" height="32" viewBox="0 0 36 32"><path d="M32 12 H14 A9 9 0 0 0 14 30 H16" fill="none" stroke="#fff" stroke-width="3.4" stroke-linecap="round"/><path d="M24 4 L32 12 L24 20" fill="none" stroke="#fff" stroke-width="3.4" stroke-linecap="round" stroke-linejoin="round"/></svg>
<svg class="r" style="left:534px;top:30px;" width="22" height="20" viewBox="0 0 22 20"><rect x="2" y="2" width="16" height="2.6" fill="#fff"/><path d="M2 8 H18 L10 17 Z" fill="#fff"/></svg>
<svg class="r" style="left:936px;top:20px;" width="30" height="34" viewBox="0 0 30 34"><path d="M4.8 2.8 H19 Q20 2.8 21 3.8 L26 8.8 Q27 9.8 27 10.8 V32.1 H4.8 Z" fill="#fff"/><rect x="1.9" y="10.3" width="13.6" height="14" rx="1.5" fill="#1f7a47"/><path d="M5.3 13.3 L11.3 20.8 M11.3 13.3 L5.3 20.8" stroke="#fff" stroke-width="1.7"/><rect x="17" y="14" width="2.9" height="1.8" fill="#2f8a5c"/><rect x="21" y="14" width="3" height="1.8" fill="#2fa777"/><rect x="17" y="17.2" width="2.9" height="1.5" fill="#1d6a44"/><rect x="21" y="17.2" width="3" height="1.5" fill="#3a7a58"/><rect x="17" y="20.2" width="2.9" height="1.5" fill="#103c26"/><rect x="21" y="20.2" width="3" height="1.5" fill="#0b2c1a"/></svg>
<div class="t" style="left:975.00px;top:24.00px;font-size:27.62px;line-height:27.62px;color:#e8f1ea;font-weight:400;font-family:'Liberation Sans', sans-serif;transform:scaleX(0.9865);-webkit-text-stroke:0.45px #e8f1ea;">College Decider and Organizer.xlsx  -  Compatibility Mode</div>
<div class="t" style="left:1680.00px;top:24.00px;font-size:27.62px;line-height:27.62px;color:#93bfa2;font-weight:400;font-family:'Liberation Sans', sans-serif;transform:scaleX(0.9613);-webkit-text-stroke:0.45px #93bfa2;">— Saved to my Mac</div>
<svg class="r" style="left:1927px;top:32px;" width="20" height="12" viewBox="0 0 20 12"><polyline points="2.0,2.5 9.5,9.5 17.0,2.5" fill="none" stroke="#93bfa2" stroke-width="2" stroke-linecap="round" stroke-linejoin="round"/></svg>
<svg class="r" style="left:2762px;top:22px;" width="34" height="34" viewBox="0 0 34 34"><circle cx="12.8" cy="12.8" r="9.1" fill="none" stroke="#fff" stroke-width="2.6"/><line x1="19.5" y1="19.5" x2="28.6" y2="28.6" stroke="#fff" stroke-width="2.8" stroke-linecap="round"/></svg>
<svg class="r" style="left:2824px;top:18px;" width="38" height="40" viewBox="0 0 38 40"><path d="M14 2 H35.8 V17.8 H31 L26 23.5 V17.8 H14 Z" fill="#fff"/><path d="M1.9 38.1 Q2.5 26.7 13.9 26.7 Q25.3 26.7 25.9 38.1 Z" fill="#fff"/><circle cx="13.8" cy="19.8" r="7" fill="#fff" stroke="#23734a" stroke-width="1.8"/></svg>
<svg class="r" style="left:2530px;top:94px;" width="30" height="29" viewBox="0 0 30 29"><path d="M4 12 V26 H22 V21" fill="none" stroke="#1e6e42" stroke-width="2.6"/><path d="M9 20 Q10 10 20 9 V4 L27 11 L20 17 V13 Q13 13 9 20 Z" fill="none" stroke="#1e6e42" stroke-width="2.4" stroke-linejoin="round"/></svg>
<svg class="r" style="left:2684px;top:94px;" width="28" height="28" viewBox="0 0 28 28"><path d="M3 3 H25 V19 H13 L8 25 V19 H3 Z" fill="none" stroke="#1e6e42" stroke-width="2.4" stroke-linejoin="round"/></svg>
<svg class="r" style="left:1082px;top:88px;" width="30" height="36" viewBox="0 0 30 36"><path d="M11 23.2 Q10.5 21 7 17.9 A10 10 0 1 1 23 17.9 Q19.5 21 19 23.2 Z" fill="none" stroke="#222" stroke-width="2"/><rect x="11" y="23.2" width="8" height="4.6" fill="none" stroke="#222" stroke-width="2"/><rect x="12" y="30" width="6" height="2" fill="#222"/></svg>
<div class="r" style="left:0px;top:286px;width:2880px;height:57px;background:#ffffff;"></div>
<div class="r" style="left:0px;top:338px;width:2880px;height:2px;background:#bdbdbd;"></div>
<div class="r" style="left:0px;top:340px;width:2880px;height:3px;background:#eeeeee;"></div>
<div class="r" style="left:168px;top:286px;width:4px;height:52px;background:#c4c4c4;"></div>
<div class="r" style="left:0px;top:286px;width:2px;height:52px;background:#c4c4c4;"></div>
<div class="t" style="left:20.80px;top:300.00px;font-size:24.00px;line-height:24.00px;color:#111;font-weight:400;font-family:'Liberation Sans', sans-serif;transform:scaleX(0.9542);-webkit-text-stroke:0.4px #111;">L18</div>
<div class="t" style="left:316.00px;top:297.00px;font-size:30.00px;line-height:30.00px;color:#444;font-weight:400;font-family:'Liberation Serif', serif;transform:scaleX(1.1204);-webkit-text-stroke:0.4px #444;font-style:italic;">fx</div>
<div class="r" style="left:360px;top:298px;width:2px;height:29px;background:#e0e0e0;"></div>
<svg class="r" style="left:144px;top:294px;" width="18" height="37" viewBox="0 0 18 37"><path d="M9 2 L16 13 H2 Z" fill="#666"/><path d="M9 35 L16 24 H2 Z" fill="#666"/></svg>
<svg class="r" style="left:198px;top:300px;" width="26" height="26" viewBox="0 0 26 26"><path d="M3 3 L23 23 M23 3 L3 23" stroke="#cbcbcb" stroke-width="4" stroke-linecap="round"/></svg>
<svg class="r" style="left:254px;top:300px;" width="32" height="26" viewBox="0 0 32 26"><path d="M3 14 L11 22 L29 4" fill="none" stroke="#cbcbcb" stroke-width="4" stroke-linecap="round" stroke-linejoin="round"/></svg>
<svg class="r" style="left:2855px;top:304px;" width="22" height="18" viewBox="0 0 22 18"><path d="M3 3 H17 L10 14 Z" fill="#5a5a5a"/></svg>
<div class="r" style="left:0px;top:343px;width:2880px;height:52px;background:linear-gradient(#fdfdfd,#f4f4f4);"></div>
<div class="r" style="left:0px;top:343px;width:2880px;height:2px;background:#c2c2c2;"></div>
<div class="r" style="left:0px;top:393px;width:2880px;height:2px;background:#c8c8c8;"></div>
<div class="r" style="left:50px;top:343px;width:2px;height:1360px;background:#c4c4c4;"></div>
<div class="r" style="left:86px;top:345px;width:2px;height:48px;background:#dedede;"></div>
<div class="r" style="left:696px;top:345px;width:2px;height:48px;background:#dedede;"></div>
<div class="r" style="left:1004px;top:345px;width:2px;height:48px;background:#dedede;"></div>
<div class="r" style="left:1312px;top:345px;width:2px;height:48px;background:#dedede;"></div>
<div class="r" style="left:1620px;top:345px;width:2px;height:48px;background:#dedede;"></div>
<div class="r" style="left:1930px;top:345px;width:2px;height:48px;background:#dedede;"></div>
<div class="r" style="left:2238px;top:345px;width:2px;height:48px;background:#dedede;"></div>
<div class="r" style="left:2368px;top:345px;width:2px;height:48px;background:#dedede;"></div>
<div class="r" style="left:2498px;top:345px;width:2px;height:48px;background:#dedede;"></div>
<div class="r" style="left:2628px;top:345px;width:2px;height:48px;background:#dedede;"></div>
<div class="r" style="left:2758px;top:345px;width:2px;height:48px;background:#dedede;"></div>
<div class="r" style="left:2760px;top:345px;width:120px;height:48px;background:#efefef;"></div>
<svg class="r" style="left:6px;top:351px;" width="42" height="41" viewBox="0 0 42 41"><path d="M40 2 V39 H2 Z" fill="#dddddd"/></svg>
<div class="r" style="left:2759px;top:391px;width:121px;height:4px;background:#217346;"></div>
<div class="t" style="left:61.24px;top:359.00px;font-size:23.26px;line-height:23.26px;color:#4a4a4a;font-weight:400;font-family:'Liberation Sans', sans-serif;">A</div>
<div class="t" style="left:384.24px;top:359.00px;font-size:23.26px;line-height:23.26px;color:#4a4a4a;font-weight:400;font-family:'Liberation Sans', sans-serif;">B</div>
<div class="t" style="left:842.60px;top:359.00px;font-size:23.26px;line-height:23.26px;color:#4a4a4a;font-weight:400;font-family:'Liberation Sans', sans-serif;">C</div>
<div class="t" style="left:1150.60px;top:359.00px;font-size:23.26px;line-height:23.26px;color:#4a4a4a;font-weight:400;font-family:'Liberation Sans', sans-serif;">D</div>
<div class="t" style="left:1459.24px;top:359.00px;font-size:23.26px;line-height:23.26px;color:#4a4a4a;font-weight:400;font-family:'Liberation Sans', sans-serif;">E</div>
<div class="t" style="left:1768.90px;top:359.00px;font-size:23.26px;line-height:23.26px;color:#4a4a4a;font-weight:400;font-family:'Liberation Sans', sans-serif;">F</div>
<div class="t" style="left:2075.95px;top:359.00px;font-size:23.26px;line-height:23.26px;color:#4a4a4a;font-weight:400;font-family:'Liberation Sans', sans-serif;">G</div>
<div class="t" style="left:2295.60px;top:359.00px;font-size:23.26px;line-height:23.26px;color:#4a4a4a;font-weight:400;font-family:'Liberation Sans', sans-serif;">H</div>
<div class="t" style="left:2430.77px;top:359.00px;font-size:23.26px;line-height:23.26px;color:#4a4a4a;font-weight:400;font-family:'Liberation Sans', sans-serif;">I</div>
<div class="t" style="left:2558.19px;top:359.00px;font-size:23.26px;line-height:23.26px;color:#4a4a4a;font-weight:400;font-family:'Liberation Sans', sans-serif;">J</div>
<div class="t" style="left:2686.24px;top:359.00px;font-size:23.26px;line-height:23.26px;color:#4a4a4a;font-weight:400;font-family:'Liberation Sans', sans-serif;">K</div>
<div class="t" style="left:2817.53px;top:359.00px;font-size:23.26px;line-height:23.26px;color:#217346;font-weight:400;font-family:'Liberation Sans', sans-serif;">L</div>
<div class="r" style="left:52px;top:395px;width:2828px;height:1308px;background:#ffffff;"></div>
<div class="r" style="left:0px;top:395px;width:49px;height:1308px;background:linear-gradient(90deg,#fbfbfb,#f4f4f4);"></div>
<div class="r" style="left:0px;top:516px;width:49px;height:2px;background:#e2e2e2;"></div>
<div class="t" style="left:18.33px;top:491.00px;font-size:23.26px;line-height:23.26px;color:#4a4a4a;font-weight:400;font-family:'Liberation Sans', sans-serif;">2</div>
<div class="r" style="left:0px;top:576px;width:49px;height:2px;background:#e2e2e2;"></div>
<div class="t" style="left:18.33px;top:551.00px;font-size:23.26px;line-height:23.26px;color:#4a4a4a;font-weight:400;font-family:'Liberation Sans', sans-serif;">3</div>
<div class="r" style="left:0px;top:626px;width:49px;height:2px;background:#e2e2e2;"></div>
<div class="t" style="left:18.33px;top:601.00px;font-size:23.26px;line-height:23.26px;color:#4a4a4a;font-weight:400;font-family:'Liberation Sans', sans-serif;">4</div>
<div class="r" style="left:0px;top:676px;width:49px;height:2px;background:#e2e2e2;"></div>
<div class="t" style="left:18.33px;top:651.00px;font-size:23.26px;line-height:23.26px;color:#4a4a4a;font-weight:400;font-family:'Liberation Sans', sans-serif;">5</div>
<div class="r" style="left:0px;top:726px;width:49px;height:2px;background:#e2e2e2;"></div>
<div class="t" style="left:18.33px;top:701.00px;font-size:23.26px;line-height:23.26px;color:#4a4a4a;font-weight:400;font-family:'Liberation Sans', sans-serif;">6</div>
<div class="r" style="left:0px;top:776px;width:49px;height:2px;background:#e2e2e2;"></div>
<div class="t" style="left:18.33px;top:751.00px;font-size:23.26px;line-height:23.26px;color:#4a4a4a;font-weight:400;font-family:'Liberation Sans', sans-serif;">7</div>
<div class="r" style="left:0px;top:826px;width:49px;height:2px;background:#e2e2e2;"></div>
<div class="t" style="left:18.33px;top:801.00px;font-size:23.26px;line-height:23.26px;color:#4a4a4a;font-weight:400;font-family:'Liberation Sans', sans-serif;">8</div>
<div class="r" style="left:0px;top:876px;width:49px;height:2px;background:#e2e2e2;"></div>
<div class="t" style="left:18.33px;top:851.00px;font-size:23.26px;line-height:23.26px;color:#4a4a4a;font-weight:400;font-family:'Liberation Sans', sans-serif;">9</div>
<div class="r" style="left:0px;top:936px;width:49px;height:2px;background:#e2e2e2;"></div>
<div class="t" style="left:11.87px;top:911.00px;font-size:23.26px;line-height:23.26px;color:#4a4a4a;font-weight:400;font-family:'Liberation Sans', sans-serif;">10</div>
<div class="r" style="left:0px;top:986px;width:49px;height:2px;background:#e2e2e2;"></div>
<div class="t" style="left:12.73px;top:961.00px;font-size:23.26px;line-height:23.26px;color:#4a4a4a;font-weight:400;font-family:'Liberation Sans', sans-serif;">11</div>
<div class="r" style="left:0px;top:1036px;width:49px;height:2px;background:#e2e2e2;"></div>
<div class="t" style="left:11.87px;top:1011.00px;font-size:23.26px;line-height:23.26px;color:#4a4a4a;font-weight:400;font-family:'Liberation Sans', sans-serif;">12</div>
<div class="r" style="left:0px;top:1086px;width:49px;height:2px;background:#e2e2e2;"></div>
<div class="t" style="left:11.87px;top:1061.00px;font-size:23.26px;line-height:23.26px;color:#4a4a4a;font-weight:400;font-family:'Liberation Sans', sans-serif;">13</div>
<div class="r" style="left:0px;top:1136px;width:49px;height:2px;background:#e2e2e2;"></div>
<div class="t" style="left:11.87px;top:1111.00px;font-size:23.26px;line-height:23.26px;color:#4a4a4a;font-weight:400;font-family:'Liberation Sans', sans-serif;">14</div>
<div class="r" style="left:0px;top:1186px;width:49px;height:2px;background:#e2e2e2;"></div>
<div class="t" style="left:11.87px;top:1161.00px;font-size:23.26px;line-height:23.26px;color:#4a4a4a;font-weight:400;font-family:'Liberation Sans', sans-serif;">15</div>
<div class="r" style="left:0px;top:1236px;width:49px;height:2px;background:#e2e2e2;"></div>
<div class="t" style="left:11.87px;top:1211.00px;font-size:23.26px;line-height:23.26px;color:#4a4a4a;font-weight:400;font-family:'Liberation Sans', sans-serif;">16</div>
<div class="r" style="left:0px;top:1286px;width:49px;height:2px;background:#e2e2e2;"></div>
<div class="t" style="left:11.87px;top:1261.00px;font-size:23.26px;line-height:23.26px;color:#4a4a4a;font-weight:400;font-family:'Liberation Sans', sans-serif;">17</div>
<div class="r" style="left:0px;top:1336px;width:49px;height:2px;background:#e2e2e2;"></div>
<div class="r" style="left:0px;top:1386px;width:49px;height:2px;background:#e2e2e2;"></div>
<div class="t" style="left:11.87px;top:1361.00px;font-size:23.26px;line-height:23.26px;color:#4a4a4a;font-weight:400;font-family:'Liberation Sans', sans-serif;">19</div>
<div class="r" style="left:0px;top:1436px;width:49px;height:2px;background:#e2e2e2;"></div>
<div class="t" style="left:11.87px;top:1411.00px;font-size:23.26px;line-height:23.26px;color:#4a4a4a;font-weight:400;font-family:'Liberation Sans', sans-serif;">20</div>
<div class="r" style="left:0px;top:1496px;width:49px;height:2px;background:#e2e2e2;"></div>
<div class="t" style="left:11.87px;top:1471.00px;font-size:23.26px;line-height:23.26px;color:#4a4a4a;font-weight:400;font-family:'Liberation Sans', sans-serif;">21</div>
<div class="r" style="left:0px;top:1546px;width:49px;height:2px;background:#e2e2e2;"></div>
<div class="t" style="left:11.87px;top:1521.00px;font-size:23.26px;line-height:23.26px;color:#4a4a4a;font-weight:400;font-family:'Liberation Sans', sans-serif;">22</div>
<div class="r" style="left:0px;top:1596px;width:49px;height:2px;background:#e2e2e2;"></div>
<div class="t" style="left:11.87px;top:1571.00px;font-size:23.26px;line-height:23.26px;color:#4a4a4a;font-weight:400;font-family:'Liberation Sans', sans-serif;">23</div>
<div class="r" style="left:0px;top:1646px;width:49px;height:2px;background:#e2e2e2;"></div>
<div class="t" style="left:11.87px;top:1621.00px;font-size:23.26px;line-height:23.26px;color:#4a4a4a;font-weight:400;font-family:'Liberation Sans', sans-serif;">24</div>
<div class="r" style="left:0px;top:1696px;width:49px;height:2px;background:#e2e2e2;"></div>
<div class="t" style="left:11.87px;top:1671.00px;font-size:23.26px;line-height:23.26px;color:#4a4a4a;font-weight:400;font-family:'Liberation Sans', sans-serif;">25</div>
<div class="r" style="left:0px;top:1287px;width:49px;height:50px;background:#efefef;"></div>
<div class="t" style="left:13.80px;top:1311.00px;font-size:23.00px;line-height:23.00px;color:#217346;font-weight:400;font-family:'Liberation Sans', sans-serif;transform:scaleX(0.9814);-webkit-text-stroke:0.4px #217346;">18</div>
<div class="r" style="left:48px;top:1286px;width:4px;height:52px;background:#217346;"></div>
<div class="r" style="left:87px;top:517px;width:2152px;height:60px;background:#f2f2f2;"></div>
<div class="r" style="left:87px;top:877px;width:2152px;height:60px;background:#f2f2f2;"></div>
<div class="r" style="left:87px;top:1437px;width:2152px;height:60px;background:#f2f2f2;"></div>
<div class="r" style="left:86px;top:516px;width:2154px;height:2px;background:#bdbdbd;"></div>
<div class="r" style="left:86px;top:576px;width:2154px;height:2px;background:#bdbdbd;"></div>
<div class="r" style="left:86px;top:626px;width:2154px;height:2px;background:#d2d2d2;"></div>
<div class="r" style="left:86px;top:676px;width:2154px;height:2px;background:#d2d2d2;"></div>
<div class="r" style="left:86px;top:726px;width:2154px;height:2px;background:#d2d2d2;"></div>
<div class="r" style="left:86px;top:776px;width:2154px;height:2px;background:#d2d2d2;"></div>
<div class="r" style="left:86px;top:826px;width:2154px;height:2px;background:#d2d2d2;"></div>
<div class="r" style="left:86px;top:876px;width:2154px;height:2px;background:#bdbdbd;"></div>
<div class="r" style="left:86px;top:936px;width:2154px;height:2px;background:#bdbdbd;"></div>
<div class="r" style="left:86px;top:986px;width:2154px;height:2px;background:#d2d2d2;"></div>
<div class="r" style="left:86px;top:1036px;width:2154px;height:2px;background:#d2d2d2;"></div>
<div class="r" style="left:86px;top:1086px;width:2154px;height:2px;background:#d2d2d2;"></div>
<div class="r" style="left:86px;top:1136px;width:2154px;height:2px;background:#d2d2d2;"></div>
<div class="r" style="left:86px;top:1186px;width:2154px;height:2px;background:#d2d2d2;"></div>
<div class="r" style="left:86px;top:1236px;width:2154px;height:2px;background:#d2d2d2;"></div>
<div class="r" style="left:86px;top:1286px;width:2154px;height:2px;background:#d2d2d2;"></div>
<div class="r" style="left:86px;top:1336px;width:2154px;height:2px;background:#d2d2d2;"></div>
<div class="r" style="left:86px;top:1386px;width:2154px;height:2px;background:#d2d2d2;"></div>
<div class="r" style="left:86px;top:1436px;width:2154px;height:2px;background:#bdbdbd;"></div>
<div class="r" style="left:86px;top:1496px;width:2154px;height:2px;background:#bdbdbd;"></div>
<div class="r" style="left:86px;top:1546px;width:2154px;height:2px;background:#d2d2d2;"></div>
<div class="r" style="left:86px;top:1596px;width:2154px;height:2px;background:#d2d2d2;"></div>
<div class="r" style="left:86px;top:1646px;width:2154px;height:2px;background:#d2d2d2;"></div>
<div class="r" style="left:86px;top:1696px;width:2154px;height:2px;background:#d2d2d2;"></div>
<div class="r" style="left:86px;top:517px;width:2px;height:1186px;background:#cfcfcf;"></div>
<div class="r" style="left:1004px;top:517px;width:2px;height:1186px;background:#cfcfcf;"></div>
<div class="r" style="left:1312px;top:517px;width:2px;height:1186px;background:#cfcfcf;"></div>
<div class="r" style="left:1620px;top:517px;width:2px;height:1186px;background:#cfcfcf;"></div>
<div class="r" style="left:1930px;top:517px;width:2px;height:1186px;background:#cfcfcf;"></div>
<div class="r" style="left:2238px;top:517px;width:2px;height:1186px;background:#cfcfcf;"></div>
<div class="r" style="left:696px;top:343px;width:2px;height:1360px;background:#9a9a9a;"></div>
<div class="t" style="left:97.60px;top:402.00px;font-size:77.86px;line-height:77.86px;color:#0a6ebd;font-weight:700;font-family:'Liberation Serif', serif;transform:scaleX(1.0148);">College Applications</div>
<div class="t" style="left:92.50px;top:590.00px;font-size:21.80px;line-height:21.80px;color:#000;font-weight:400;font-family:'Liberation Sans', sans-serif;transform:scaleX(1.0130);-webkit-text-stroke:0.3px #000;">Location</div>
<div class="t" style="left:92.50px;top:640.00px;font-size:21.80px;line-height:21.80px;color:#000;font-weight:400;font-family:'Liberation Sans', sans-serif;transform:scaleX(1.0130);-webkit-text-stroke:0.3px #000;">Rank information</div>
<div class="t" style="left:92.50px;top:690.00px;font-size:21.80px;line-height:21.80px;color:#000;font-weight:400;font-family:'Liberation Sans', sans-serif;transform:scaleX(1.0130);-webkit-text-stroke:0.3px #000;">Web address</div>
<div class="t" style="left:92.50px;top:740.00px;font-size:21.80px;line-height:21.80px;color:#000;font-weight:400;font-family:'Liberation Sans', sans-serif;transform:scaleX(1.0130);-webkit-text-stroke:0.3px #000;">Size</div>
<div class="t" style="left:92.50px;top:790.00px;font-size:21.80px;line-height:21.80px;color:#000;font-weight:400;font-family:'Liberation Sans', sans-serif;transform:scaleX(1.0130);-webkit-text-stroke:0.3px #000;">Colleges and schools</div>
<div class="t" style="left:92.50px;top:840.00px;font-size:21.80px;line-height:21.80px;color:#000;font-weight:400;font-family:'Liberation Sans', sans-serif;transform:scaleX(1.0130);-webkit-text-stroke:0.3px #000;">Other</div>
<div class="t" style="left:92.50px;top:950.00px;font-size:21.80px;line-height:21.80px;color:#000;font-weight:400;font-family:'Liberation Sans', sans-serif;transform:scaleX(1.0130);-webkit-text-stroke:0.3px #000;">Admissions address</div>
<div class="t" style="left:92.50px;top:1000.00px;font-size:21.80px;line-height:21.80px;color:#000;font-weight:400;font-family:'Liberation Sans', sans-serif;transform:scaleX(1.0130);-webkit-text-stroke:0.3px #000;">Admissions telephone</div>
<div class="t" style="left:92.50px;top:1050.00px;font-size:21.80px;line-height:21.80px;color:#000;font-weight:400;font-family:'Liberation Sans', sans-serif;transform:scaleX(1.0130);-webkit-text-stroke:0.3px #000;">Contact person</div>
<div class="t" style="left:92.50px;top:1100.00px;font-size:21.80px;line-height:21.80px;color:#000;font-weight:400;font-family:'Liberation Sans', sans-serif;transform:scaleX(1.0130);-webkit-text-stroke:0.3px #000;">Application fee</div>
<div class="t" style="left:92.50px;top:1150.00px;font-size:21.80px;line-height:21.80px;color:#000;font-weight:400;font-family:'Liberation Sans', sans-serif;transform:scaleX(1.0130);-webkit-text-stroke:0.3px #000;">Date application due</div>
<div class="t" style="left:92.50px;top:1200.00px;font-size:21.80px;line-height:21.80px;color:#000;font-weight:400;font-family:'Liberation Sans', sans-serif;transform:scaleX(1.0130);-webkit-text-stroke:0.3px #000;">Send transcripts to</div>
<div class="t" style="left:92.50px;top:1250.00px;font-size:21.80px;line-height:21.80px;color:#000;font-weight:400;font-family:'Liberation Sans', sans-serif;transform:scaleX(1.0130);-webkit-text-stroke:0.3px #000;">Date application mailed</div>
<div class="t" style="left:92.50px;top:1300.00px;font-size:21.80px;line-height:21.80px;color:#000;font-weight:400;font-family:'Liberation Sans', sans-serif;transform:scaleX(1.0130);-webkit-text-stroke:0.3px #000;">Accepted?</div>
<div class="t" style="left:92.50px;top:1350.00px;font-size:21.80px;line-height:21.80px;color:#000;font-weight:400;font-family:'Liberation Sans', sans-serif;transform:scaleX(1.0130);-webkit-text-stroke:0.3px #000;">Accept or decline by date</div>
<div class="t" style="left:92.50px;top:1400.00px;font-size:21.80px;line-height:21.80px;color:#000;font-weight:400;font-family:'Liberation Sans', sans-serif;transform:scaleX(1.0130);-webkit-text-stroke:0.3px #000;">Other</div>
<div class="t" style="left:92.50px;top:1510.00px;font-size:21.80px;line-height:21.80px;color:#000;font-weight:400;font-family:'Liberation Sans', sans-serif;transform:scaleX(1.0130);-webkit-text-stroke:0.3px #000;">SAT minimum score</div>
<div class="t" style="left:92.50px;top:1560.00px;font-size:21.80px;line-height:21.80px;color:#000;font-weight:400;font-family:'Liberation Sans', sans-serif;transform:scaleX(1.0130);-webkit-text-stroke:0.3px #000;">ACT minimum score</div>
<div class="t" style="left:92.50px;top:1610.00px;font-size:21.80px;line-height:21.80px;color:#000;font-weight:400;font-family:'Liberation Sans', sans-serif;transform:scaleX(1.0130);-webkit-text-stroke:0.3px #000;">Other standardized tests</div>
<div class="t" style="left:92.50px;top:1660.00px;font-size:21.80px;line-height:21.80px;color:#000;font-weight:400;font-family:'Liberation Sans', sans-serif;transform:scaleX(1.0130);-webkit-text-stroke:0.3px #000;">Grades</div>
<div class="t" style="left:94.80px;top:527.00px;font-size:37.25px;line-height:37.25px;color:#0a6ebd;font-weight:700;font-family:'Liberation Serif', serif;transform:scaleX(0.9791);">General Information</div>
<div class="t" style="left:795.60px;top:531.00px;font-size:30.53px;line-height:30.53px;color:#0a6ebd;font-weight:700;font-family:'Liberation Serif', serif;transform:scaleX(1.0125);">School 1</div>
<div class="t" style="left:1103.60px;top:531.00px;font-size:30.53px;line-height:30.53px;color:#0a6ebd;font-weight:700;font-family:'Liberation Serif', serif;transform:scaleX(1.0125);">School 2</div>
<div class="t" style="left:1411.60px;top:531.00px;font-size:30.53px;line-height:30.53px;color:#0a6ebd;font-weight:700;font-family:'Liberation Serif', serif;transform:scaleX(1.0125);">School 3</div>
<div class="t" style="left:1720.60px;top:531.00px;font-size:30.53px;line-height:30.53px;color:#0a6ebd;font-weight:700;font-family:'Liberation Serif', serif;transform:scaleX(1.0125);">School 4</div>
<div class="t" style="left:2029.60px;top:531.00px;font-size:30.53px;line-height:30.53px;color:#0a6ebd;font-weight:700;font-family:'Liberation Serif', serif;transform:scaleX(1.0125);">School 5</div>
<div class="t" style="left:94.80px;top:887.00px;font-size:37.25px;line-height:37.25px;color:#0a6ebd;font-weight:700;font-family:'Liberation Serif', serif;">Applying</div>
<div class="t" style="left:795.60px;top:891.00px;font-size:30.53px;line-height:30.53px;color:#0a6ebd;font-weight:700;font-family:'Liberation Serif', serif;transform:scaleX(1.0125);">School 1</div>
<div class="t" style="left:1103.60px;top:891.00px;font-size:30.53px;line-height:30.53px;color:#0a6ebd;font-weight:700;font-family:'Liberation Serif', serif;transform:scaleX(1.0125);">School 2</div>
<div class="t" style="left:1411.60px;top:891.00px;font-size:30.53px;line-height:30.53px;color:#0a6ebd;font-weight:700;font-family:'Liberation Serif', serif;transform:scaleX(1.0125);">School 3</div>
<div class="t" style="left:1720.60px;top:891.00px;font-size:30.53px;line-height:30.53px;color:#0a6ebd;font-weight:700;font-family:'Liberation Serif', serif;transform:scaleX(1.0125);">School 4</div>
<div class="t" style="left:2029.60px;top:891.00px;font-size:30.53px;line-height:30.53px;color:#0a6ebd;font-weight:700;font-family:'Liberation Serif', serif;transform:scaleX(1.0125);">School 5</div>
<div class="t" style="left:94.80px;top:1447.00px;font-size:37.25px;line-height:37.25px;color:#0a6ebd;font-weight:700;font-family:'Liberation Serif', serif;transform:scaleX(0.9852);">Requirements</div>
<div class="t" style="left:795.60px;top:1451.00px;font-size:30.53px;line-height:30.53px;color:#0a6ebd;font-weight:700;font-family:'Liberation Serif', serif;transform:scaleX(1.0125);">School 1</div>
<div class="t" style="left:1103.60px;top:1451.00px;font-size:30.53px;line-height:30.53px;color:#0a6ebd;font-weight:700;font-family:'Liberation Serif', serif;transform:scaleX(1.0125);">School 2</div>
<div class="t" style="left:1411.60px;top:1451.00px;font-size:30.53px;line-height:30.53px;color:#0a6ebd;font-weight:700;font-family:'Liberation Serif', serif;transform:scaleX(1.0125);">School 3</div>
<div class="t" style="left:1720.60px;top:1451.00px;font-size:30.53px;line-height:30.53px;color:#0a6ebd;font-weight:700;font-family:'Liberation Serif', serif;transform:scaleX(1.0125);">School 4</div>
<div class="t" style="left:2029.60px;top:1451.00px;font-size:30.53px;line-height:30.53px;color:#0a6ebd;font-weight:700;font-family:'Liberation Serif', serif;transform:scaleX(1.0125);">School 5</div>
<div class="r" style="left:2756px;top:1284px;width:124px;height:56px;border:4px solid #217346;border-right:none;box-sizing:border-box;"></div>
<div class="r" style="left:0px;top:1703px;width:2880px;height:51px;background:#efefef;"></div>
<div class="r" style="left:0px;top:1701px;width:2880px;height:2px;background:#c9c9c9;"></div>
<div class="r" style="left:120px;top:1705px;width:2px;height:40px;background:#d0d0d0;"></div>
<svg class="r" style="left:28px;top:1716px;" width="18" height="25" viewBox="0 0 18 25"><path d="M15 2 V23 L2 12.5 Z" fill="#b3b3b3"/></svg>
<svg class="r" style="left:74px;top:1716px;" width="18" height="25" viewBox="0 0 18 25"><path d="M3 2 V23 L16 12.5 Z" fill="#b3b3b3"/></svg>
<div class="r" style="left:1211px;top:1725px;width:22px;height:4px;background:#555;"></div>
<div class="r" style="left:1220px;top:1716px;width:4px;height:22px;background:#555;"></div>
<div class="r" style="left:1182px;top:1705px;width:2px;height:40px;background:#d0d0d0;"></div>
<div class="r" style="left:1258px;top:1705px;width:2px;height:40px;background:#d0d0d0;"></div>
<div class="r" style="left:379px;top:1702px;width:442px;height:45px;background:#ffffff;border:1px solid #c6c6c6;border-top:none;box-sizing:border-box;border-radius:0 0 6px 6px;box-shadow:0 1px 2px rgba(0,0,0,.18);"></div>
<div class="t" style="left:162.00px;top:1714.00px;font-size:26.16px;line-height:26.16px;color:#111;font-weight:400;font-family:'Liberation Sans', sans-serif;transform:scaleX(0.9487);-webkit-text-stroke:0.9px #111;">College Decider</div>
<div class="t" style="left:423.00px;top:1714.00px;font-size:26.16px;line-height:26.16px;color:#23804a;font-weight:700;font-family:'Liberation Sans', sans-serif;transform:scaleX(0.9143);">College Applications Organizer</div>
<div class="t" style="left:862.00px;top:1714.00px;font-size:26.16px;line-height:26.16px;color:#111;font-weight:400;font-family:'Liberation Sans', sans-serif;transform:scaleX(0.9451);-webkit-text-stroke:0.9px #111;">College Decider Example</div>
<div class="r" style="left:0px;top:1754px;width:2880px;height:46px;background:linear-gradient(#e9e9e9,#d6d6d6);"></div>
<div class="r" style="left:0px;top:1753px;width:2880px;height:2px;background:#b6b6b6;"></div>
<div class="t" style="left:49.00px;top:1766.00px;font-size:25.44px;line-height:25.44px;color:#555;font-weight:400;font-family:'Liberation Sans', sans-serif;transform:scaleX(0.9315);-webkit-text-stroke:0.3px #555;">Ready</div>
<svg class="r" style="left:2341px;top:1762px;" width="32" height="30" viewBox="0 0 32 30"><rect x="2" y="2" width="27" height="26" fill="none" stroke="#666" stroke-width="2.2"/><rect x="8" y="7" width="15" height="16" fill="none" stroke="#666" stroke-width="1.8"/><line x1="11" y1="12" x2="20" y2="12" stroke="#666" stroke-width="1.6"/><line x1="11" y1="15.5" x2="20" y2="15.5" stroke="#666" stroke-width="1.6"/><line x1="11" y1="19" x2="20" y2="19" stroke="#666" stroke-width="1.6"/></svg>
<svg class="r" style="left:2412px;top:1762px;" width="32" height="30" viewBox="0 0 32 30"><rect x="2" y="2" width="27" height="26" fill="none" stroke="#666" stroke-width="2.2"/><path d="M2 16 H18 V2 M10 2 V16" fill="none" stroke="#666" stroke-width="2"/></svg>
<div class="r" style="left:2480px;top:1775px;width:16px;height:4px;background:#666;"></div>
<div class="r" style="left:2724px;top:1776px;width:16px;height:4px;background:#555;"></div>
<div class="r" style="left:2730px;top:1769px;width:4px;height:17px;background:#555;"></div>
<div class="r" style="left:2248px;top:1755px;width:74px;height:45px;background:#a9a9a9;"></div>
<svg class="r" style="left:2269px;top:1762px;" width="32" height="30" viewBox="0 0 32 30"><rect x="2" y="2" width="28" height="27" rx="2" fill="#fff"/><rect x="4.5" y="4.5" width="6" height="6" fill="#a9a9a9"/><rect x="4.5" y="12.6" width="6" height="6" fill="#a9a9a9"/><rect x="4.5" y="20.7" width="6" height="6" fill="#a9a9a9"/><rect x="12.8" y="4.5" width="6" height="6" fill="#a9a9a9"/><rect x="12.8" y="12.6" width="6" height="6" fill="#a9a9a9"/><rect x="12.8" y="20.7" width="6" height="6" fill="#a9a9a9"/><rect x="21.1" y="4.5" width="6" height="6" fill="#a9a9a9"/><rect x="21.1" y="12.6" width="6" height="6" fill="#a9a9a9"/><rect x="21.1" y="20.7" width="6" height="6" fill="#a9a9a9"/></svg>
<div class="r" style="left:2512px;top:1774px;width:196px;height:8px;background:#9b9b9b;border-radius:4px;"></div>
<div class="r" style="left:2603px;top:1765px;width:22px;height:22px;background:#ffffff;border-radius:11px;box-shadow:0 0 1px 1px rgba(0,0,0,.25);"></div>
<div class="t" style="left:2774.60px;top:1766.00px;font-size:23.98px;line-height:23.98px;color:#444;font-weight:400;font-family:'Liberation Sans', sans-serif;transform:scaleX(0.9438);-webkit-text-stroke:0.2px #444;">119%</div>
</body></html>
